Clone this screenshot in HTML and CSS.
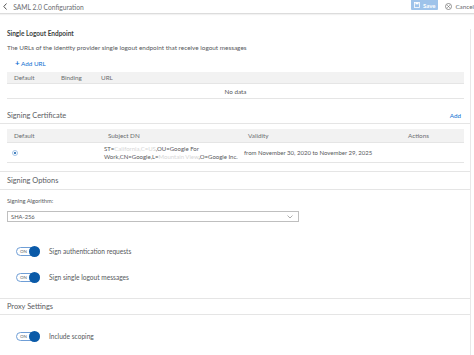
FILE: index.html
```html
<!DOCTYPE html>
<html>
  <head>
    <meta charset="UTF-8" />
    <title>SAML 2.0 Configuration</title>
    <link rel="stylesheet" href="styles.css">
  </head>
  <body>
    <div class="topbar">
      <span class="back">
        <svg width="4" height="7" viewBox="0 0 4 7"><polyline points="3.5,0.5 0.8,3.5 3.5,6.5" fill="none" stroke="#555" stroke-width="1"/></svg>
      </span>
      <span class="title">SAML 2.0 Configuration</span>
      <span class="save">
        <svg width="6" height="6" viewBox="0 0 6 6"><rect x="0.5" y="0.5" width="5" height="5" fill="none" stroke="#fff" stroke-width="0.8"/><rect x="1.5" y="0.5" width="3" height="1.8" fill="#fff"/></svg>
        Save
      </span>
      <span class="cancel">
        <svg width="7" height="7" viewBox="0 0 7 7"><circle cx="3.5" cy="3.5" r="3" fill="none" stroke="#777" stroke-width="0.8"/><path d="M2.3 2.3 L4.7 4.7 M4.7 2.3 L2.3 4.7" stroke="#777" stroke-width="0.8"/></svg>
        Cancel
      </span>
    </div>

    <div class="content">
      <div class="logout">
        <div class="heading">Single Logout Endpoint</div>
        <div class="desc">The URLs of the identity provider single logout endpoint that receive logout messages</div>
        <div class="addurl"><span class="plus">+</span> Add URL</div>
        <table class="grid urls">
          <tr><th class="c-def">Default</th><th class="c-bind">Binding</th><th>URL</th></tr>
          <tr><td colspan="3" class="nodata">No data</td></tr>
        </table>
      </div>

      <div class="panel certs">
        <div class="panel-head"><span>Signing Certificate</span><span class="link">Add</span></div>
        <table class="grid certtable">
          <tr>
            <th class="k-def">Default</th><th class="k-dn">Subject DN</th>
            <th class="k-val">Validity</th><th>Actions</th>
          </tr>
          <tr class="certrow">
            <td><span class="radio"></span></td>
            <td class="dn">ST=<span class="blur">California,C=US</span>,OU=Google For<br>Work,CN=Google,L=<span class="blur">Mountain View</span>,O=Google Inc.</td>
            <td class="val">from November 30, 2020 to November 29, 2025</td>
            <td></td>
          </tr>
        </table>
      </div>

      <div class="panel options">
        <div class="panel-head"><span>Signing Options</span></div>
        <div class="label">Signing Algorithm:</div>
        <div class="select">
          <span>SHA-256</span>
          <svg width="6" height="4" viewBox="0 0 6 4"><polyline points="0.5,0.5 3,3 5.5,0.5" fill="none" stroke="#999" stroke-width="0.8"/></svg>
        </div>
        <div class="switchrow first"><span class="toggle"><span>ON</span><i></i></span>Sign authentication requests</div>
        <div class="switchrow"><span class="toggle"><span>ON</span><i></i></span>Sign single logout messages</div>
      </div>

      <div class="panel proxy">
        <div class="panel-head"><span>Proxy Settings</span></div>
        <div class="switchrow"><span class="toggle"><span>ON</span><i></i></span>Include scoping</div>
      </div>
    </div>
  </body>
</html>
```

FILE: styles.css
```css
html, body {
  margin: 0; padding: 0; background: #fff;
  width: 474px; height: 355px; overflow: hidden;
}
body {
  font-family: Lato, "Noto Sans", sans-serif;
  color: #56585b; font-size: 6.3px;
}

/* header bar */
.topbar {
  display: flex; align-items: center; height: 13px;
  border-bottom: 1px solid #dcdcdc; box-shadow: 0 1px 1px rgba(0,0,0,0.05);
  white-space: nowrap; overflow: hidden; width: 474px;
}
.topbar .back { display: flex; padding-left: 3px; width: 11px; }
.topbar .title { flex: 0 0 398px; font-size: 6.7px; color: #6a6d70; }
.topbar .save {
  align-self: flex-start; display: flex; align-items: center; gap: 3px;
  height: 10px; width: 29px; justify-content: center; box-sizing: border-box;
  background: #9ec3ea; color: #fff; font-size: 6px; font-weight: bold;
  border-radius: 0 0 1px 1px;
}
.topbar .cancel {
  display: flex; align-items: center; gap: 3px; margin-left: 7px;
  font-size: 6.3px; color: #6a6d70; flex-shrink: 0;
}

.content {
  width: 470px; height: 341px; border-right: 1px solid #e8e8e8;
}

/* single logout endpoint */
.logout { padding: 0 7px; }
.logout .heading {
  margin-top: 15px; line-height: 10px; font-weight: bold; font-size: 6.5px; color: #3c3f42;
}
.logout .desc { margin-top: 4px; line-height: 10px; font-size: 6.4px; }
.logout .addurl {
  margin-top: 5px; line-height: 10px; padding-left: 8px; color: #0a6ed1;
}
.logout .plus { font-size: 8px; font-weight: bold; }

.grid { border-collapse: collapse; width: 457px; table-layout: fixed; }
.grid th {
  background: #f2f2f2; color: #6a6d70; font-weight: normal; text-align: left;
  padding: 0 0 0 7px; border-bottom: 1px solid #e5e5e5;
}
.grid td { border-bottom: 1px solid #e5e5e5; padding: 0; }
.urls { margin-top: 3px; }
.urls th { height: 11px; }
.urls .c-def { width: 40px; }
.urls .c-bind { width: 33px; }
.urls .nodata { height: 14px; text-align: center; }

/* panels */
.panel { border-bottom: 1px solid #e5e5e5; }
.panel-head {
  display: flex; justify-content: space-between; align-items: center;
  padding: 0 9px 0 7px; border-bottom: 1px solid #e5e5e5;
  font-size: 7.4px; color: #5a5c5f;
}
.panel-head .link { color: #0a6ed1; font-size: 6.3px; }
.certs { padding-bottom: 8px; }
.certs .panel-head { margin-top: 8px; height: 16px; }
.certtable { margin: 5px 0 0 7px; }
.certtable th { height: 13px; }
.certtable .k-def { width: 87px; }
.certtable .k-dn { width: 133px; }
.certtable .k-val { width: 153px; }
.certrow td { height: 19px; font-size: 6px; line-height: 8px; }
.certrow td.dn, .certrow td.val { padding-left: 3px; }
.certrow td:first-child { padding-left: 5px; }
.blur { color: #d6d6d6; }
.radio {
  display: inline-block; width: 4px; height: 4px; border-radius: 50%;
  border: 1px solid #a8c6e8; position: relative; vertical-align: middle;
}
.radio::after {
  content: ""; position: absolute; left: 1px; top: 1px;
  width: 2px; height: 2px; border-radius: 50%; background: #0a5aa8;
}

.options { padding-bottom: 16px; }
.options .panel-head { height: 17px; }
.options .label { margin: 6px 0 0 7px; line-height: 10px; font-size: 5.8px; }
.select {
  margin: 5px 0 0 7px; width: 292px; height: 11px; box-sizing: border-box;
  border: 1px solid #bfbfbf; display: flex; align-items: center;
  justify-content: space-between; padding: 0 5px 0 3px; font-size: 5.8px;
}
.switchrow {
  display: flex; align-items: center; height: 10px; margin-top: 16px;
  padding-left: 16px; font-size: 6.6px;
}
.switchrow.first { margin-top: 24px; }
.toggle {
  position: relative; display: inline-block; width: 24px; height: 9px;
  box-sizing: border-box; border: 1px solid #6f9ed6; border-radius: 5px;
  margin-right: 9px;
}
.toggle span {
  position: absolute; left: 3px; top: 0; line-height: 7px; font-size: 4.5px; color: #6a6d70;
}
.toggle i {
  position: absolute; right: -1px; top: -2px; width: 11px; height: 11px;
  border-radius: 50%; background: #0a5aa8;
}
.proxy { border-bottom: none; }
.proxy .panel-head { height: 15px; }
.proxy .switchrow { margin-top: 16px; }
```
